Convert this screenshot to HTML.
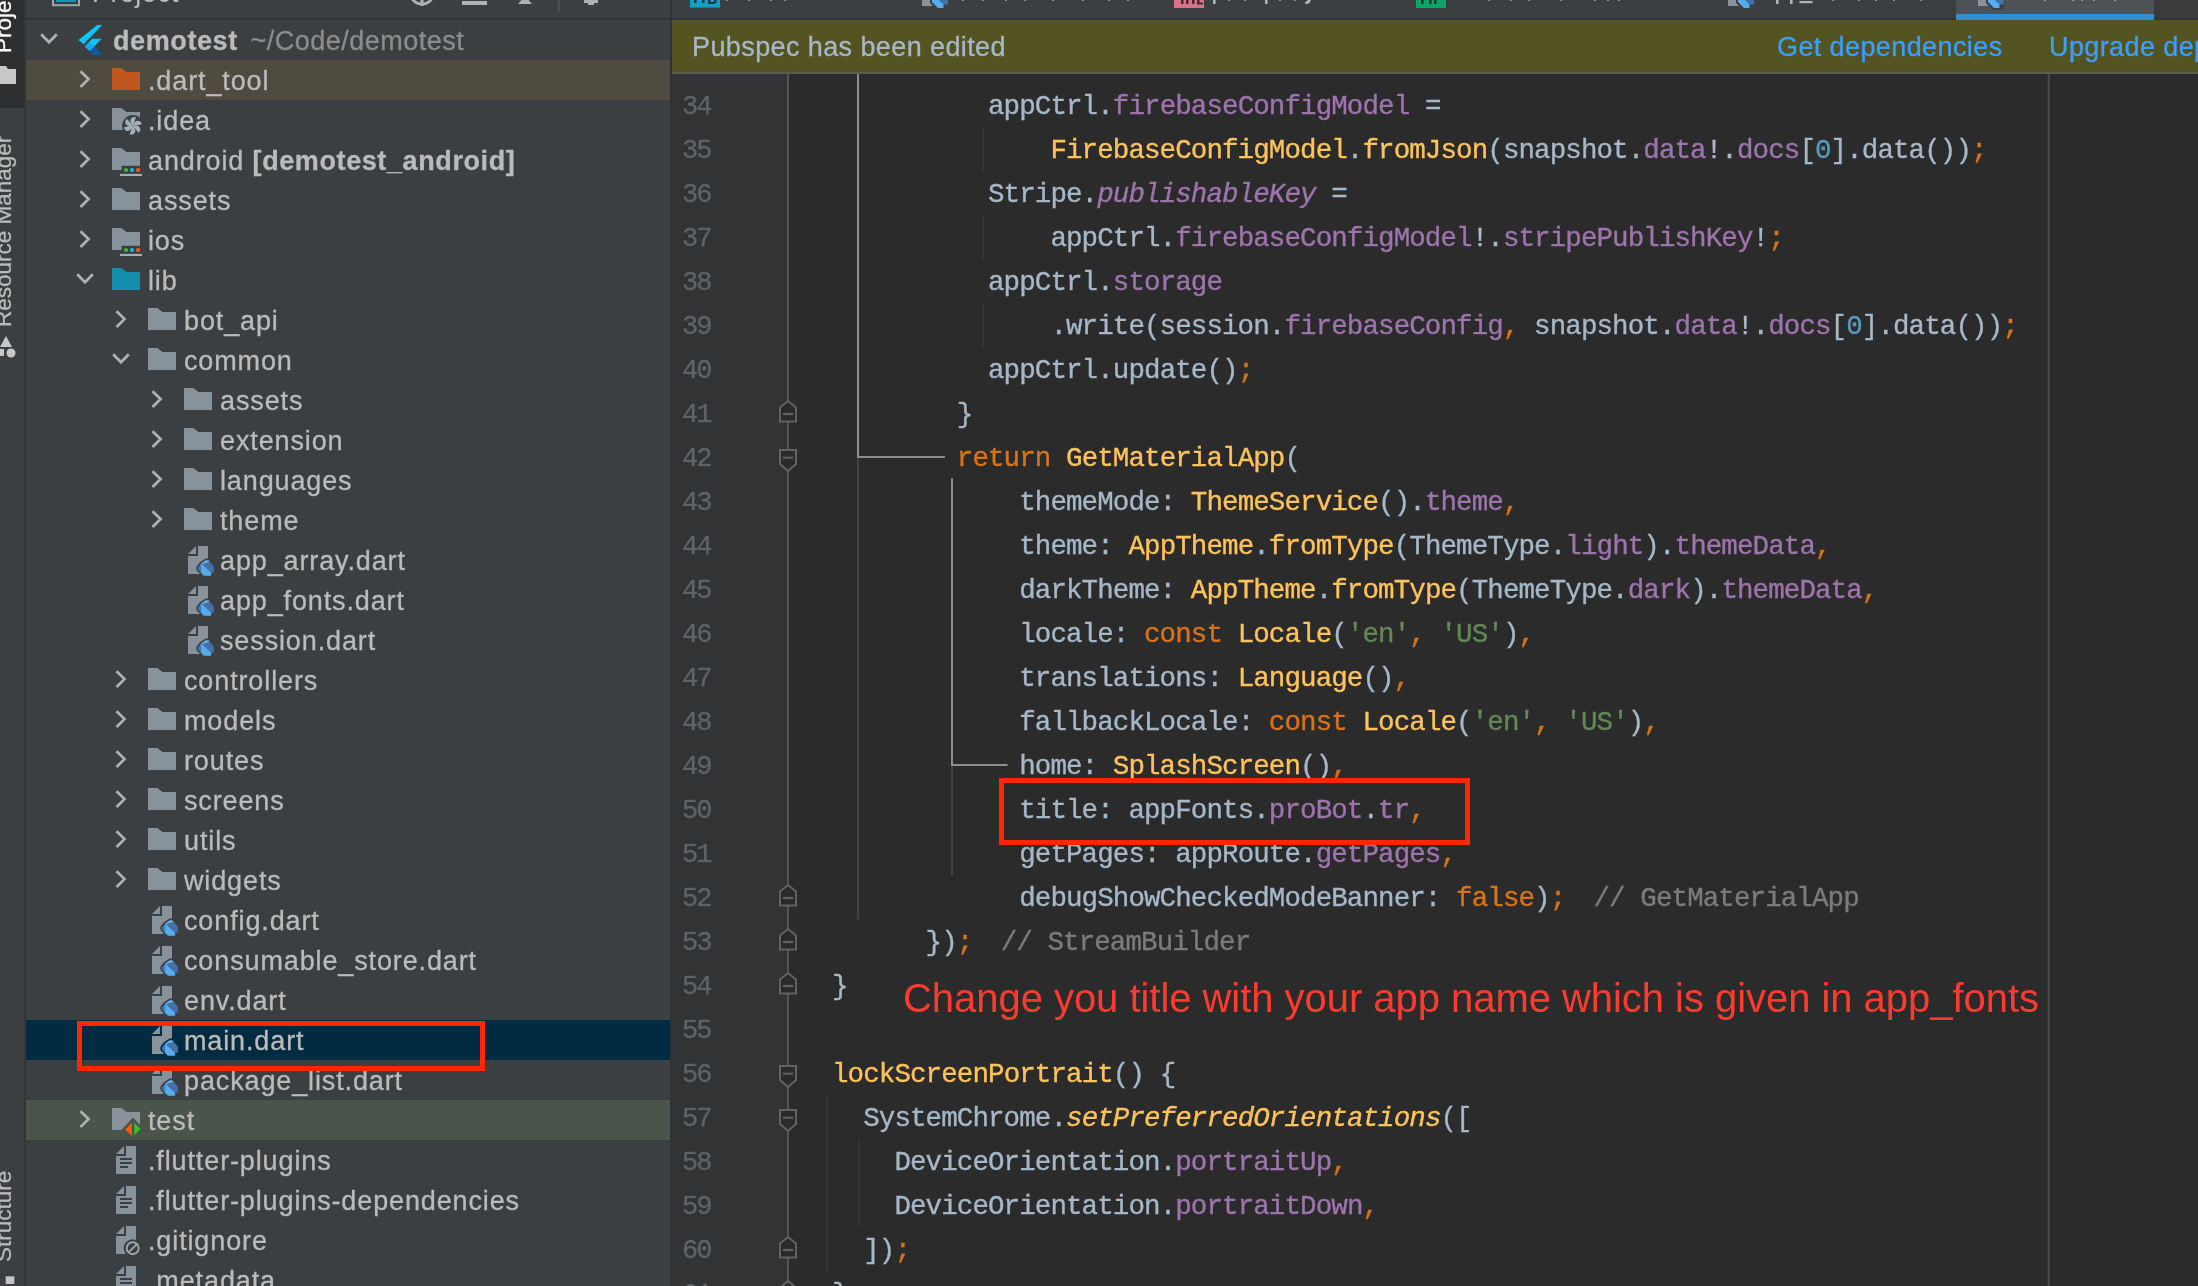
<!DOCTYPE html><html><head><meta charset="utf-8"><title>IDE</title>
<style>
*{box-sizing:border-box;margin:0;padding:0}
html,body{width:2198px;height:1286px;overflow:hidden;background:#2b2b2b}
body{position:relative;font-family:"Liberation Sans",sans-serif;color:#bbbbbb}
.abs{position:absolute}
#root{position:absolute;left:0;top:0;width:2198px;height:1286px;overflow:hidden;will-change:transform}
#strip{left:0;top:0;width:24px;height:1286px;background:#3c3f41}
#stripsel{left:0;top:0;width:24px;height:108px;background:#2d2f30}
#stripline{left:24px;top:0;width:2px;height:1286px;background:#333537}
.vtext{position:absolute;white-space:nowrap;transform-origin:0 0;transform:rotate(-90deg);font-size:22.5px;line-height:26px;height:26px;-webkit-text-stroke:0.25px}
#panel{left:26px;top:0;width:644px;height:1286px;background:#3c3f41;overflow:hidden}
#phead{left:0;top:0;width:644px;height:19px;background:#3c3f41}
#pheadline{left:0;top:18px;width:644px;height:2px;background:#323435}
.row{position:absolute;left:0;width:644px;height:40px}
.row .lbl{position:absolute;top:1px;height:40px;line-height:40px;font-size:27px;white-space:nowrap;color:#bbbbbb;letter-spacing:0.87px;-webkit-text-stroke:0.3px}
.row .lbl b{font-weight:bold;letter-spacing:0.6px}
.row .lbl .dim{color:#8c8c8c;letter-spacing:0.5px;margin-left:4.3px}
.ico{position:absolute;width:32px;height:32px;top:4px}
.chev{position:absolute;width:24px;height:24px;top:8px}
#divider{left:670px;top:0;width:2px;height:1286px;background:#2f3133}
#tabbar{left:672px;top:0;width:1526px;height:19px;background:#3c3f41}
#tabline{left:672px;top:18px;width:1526px;height:2px;background:#323435}
#banner{left:672px;top:20px;width:1526px;height:53px;background:#545322}
#bannerline{left:672px;top:72px;width:1526px;height:2px;background:#5d5d55}
#banner .t{position:absolute;top:0;height:53px;line-height:54px;font-size:27px;letter-spacing:0.4px;white-space:nowrap;-webkit-text-stroke:0.3px}
#gutter{left:672px;top:74px;width:117px;height:1212px;background:#313335}
#editor{left:672px;top:74px;width:1526px;height:1212px;overflow:hidden}
.ln{position:absolute;left:10px;width:60px;height:44px;line-height:44px;font-family:"Liberation Mono",monospace;font-size:27px;letter-spacing:-2px;color:#606366;white-space:pre;-webkit-text-stroke:0.3px}
.cl{position:absolute;height:44px;line-height:44px;font-family:"Liberation Mono",monospace;font-size:27.5px;letter-spacing:-0.9px;color:#a6b8c8;white-space:pre;-webkit-text-stroke:0.35px}
.cl i{font-style:italic}
.k{color:#d97317}.s{color:#628854}.n{color:#5999bf}.f{color:#9e74ae}.y{color:#ffc35b}.c{color:#7b7b7b;position:relative;left:-3px}
.vl{position:absolute;width:1px}
.hl{position:absolute;height:1px}
#redtxt{left:903px;top:970px;height:56px;line-height:56px;font-size:40px;letter-spacing:-0.04px;color:#ff3b30;white-space:nowrap}
.redbox{position:absolute;border:5px solid #ff2600}
</style></head><body><div id="root">
<div class="abs" id="strip"></div><div class="abs" id="stripsel"></div>
<div class="vtext" style="left:-9px;top:53px;color:#ffffff">Project</div>
<div class="vtext" style="left:-9px;top:327px;color:#bbbbbb">Resource Manager</div>
<div class="vtext" style="left:-9px;top:1262px;color:#bbbbbb">Structure</div>
<svg class="abs" style="left:0;top:0" width="25" height="1286" viewBox="0 0 25 1286"><path d="M0 66h6l2 3h8v15H0z" fill="#c8c8c8"/><polygon points="0,347 6,336 12,347" fill="#c8c8c8"/><rect x="-2" y="349" width="6" height="7" fill="#c8c8c8"/><circle cx="11" cy="353" r="4.5" fill="#c8c8c8"/><rect x="5.7" y="1276.3" width="8.6" height="7.7" fill="#c4c4c4"/></svg>
<div class="abs" id="stripline"></div>
<div class="abs" id="panel">
<div class="row" style="top:20px;"><svg class="chev" style="left:11px" viewBox="0 0 24 24"><polyline points="4.2,6.2 12,14.3 19.8,6.2" fill="none" stroke="#afb1b3" stroke-width="2.7"/></svg><svg class="ico" style="left:47px;top:3px;width:34px;height:34px" viewBox="0 0 34 34"><polygon fill="#08c8fb" points="24.2,2 29.2,2 10.5,21.3 5.5,16.9"/><polygon fill="#08c8fb" points="19.2,15.7 28.6,15.7 16.8,28.1 11.8,23.5"/><polygon fill="#19a8e8" points="11.8,23.5 16.7,18.7 21.7,23.8 16.8,28.1"/><polygon fill="#0b5aa8" points="16.8,28.1 21.7,23.8 29.2,31.9 19.9,31.9"/></svg><div class="lbl" style="left:87px"><b>demotest</b> <span class="dim">~/Code/demotest</span></div></div>
<div class="row" style="top:60px;background:#4f4b41;"><svg class="chev" style="left:47px" viewBox="0 0 24 24"><polyline points="7.5,3.2 15.5,11.1 7.5,19" fill="none" stroke="#afb1b3" stroke-width="2.7"/></svg><svg class="ico" style="left:84px" viewBox="0 0 32 32"><polygon fill="#c0571f" points="2,26 30,26 30,8 16.2,8 11.6,4 2,4"/></svg><div class="lbl" style="left:122px">.dart_tool</div></div>
<div class="row" style="top:100px;"><svg class="chev" style="left:47px" viewBox="0 0 24 24"><polyline points="7.5,3.2 15.5,11.1 7.5,19" fill="none" stroke="#afb1b3" stroke-width="2.7"/></svg><svg class="ico" style="left:84px" viewBox="0 0 32 32"><polygon fill="#87929a" points="2,26 30,26 30,8 16.2,8 11.6,4 2,4"/><circle cx="22.8" cy="21.8" r="10.7" fill="#3c3f41"/><g fill="#a3b0b9"><path d="M22.80 21.80 Q17.95 16.41 22.50 13.16 L25.98 13.06 Q24.50 17.98 22.80 21.80 Z"/><path d="M22.80 21.80 Q25.04 14.90 30.13 17.22 L31.96 20.19 Q26.96 21.36 22.80 21.80 Z"/><path d="M22.80 21.80 Q29.90 20.29 30.44 25.86 L28.78 28.92 Q25.26 25.19 22.80 21.80 Z"/><path d="M22.80 21.80 Q27.65 27.19 23.10 30.44 L19.62 30.54 Q21.10 25.62 22.80 21.80 Z"/><path d="M22.80 21.80 Q20.56 28.70 15.47 26.38 L13.64 23.41 Q18.64 22.24 22.80 21.80 Z"/><path d="M22.80 21.80 Q15.70 23.31 15.16 17.74 L16.82 14.68 Q20.34 18.41 22.80 21.80 Z"/></g></svg><div class="lbl" style="left:122px">.idea</div></div>
<div class="row" style="top:140px;"><svg class="chev" style="left:47px" viewBox="0 0 24 24"><polyline points="7.5,3.2 15.5,11.1 7.5,19" fill="none" stroke="#afb1b3" stroke-width="2.7"/></svg><svg class="ico" style="left:84px" viewBox="0 0 32 32"><polygon fill="#87929a" points="2,26 30,26 30,8 16.2,8 11.6,4 2,4"/><rect x="11.6" y="21.8" width="21" height="11" fill="#3c3f41"/><circle cx="16.1" cy="26" r="2.1" fill="#3bb82e"/><circle cx="22" cy="26" r="2.1" fill="#1ab8f0"/><circle cx="28" cy="26" r="2.1" fill="#ff5a0e"/><rect x="9.9" y="29.9" width="22.2" height="2.1" fill="#a4b0b8"/></svg><div class="lbl" style="left:122px">android <b>[demotest_android]</b></div></div>
<div class="row" style="top:180px;"><svg class="chev" style="left:47px" viewBox="0 0 24 24"><polyline points="7.5,3.2 15.5,11.1 7.5,19" fill="none" stroke="#afb1b3" stroke-width="2.7"/></svg><svg class="ico" style="left:84px" viewBox="0 0 32 32"><polygon fill="#87929a" points="2,26 30,26 30,8 16.2,8 11.6,4 2,4"/></svg><div class="lbl" style="left:122px">assets</div></div>
<div class="row" style="top:220px;"><svg class="chev" style="left:47px" viewBox="0 0 24 24"><polyline points="7.5,3.2 15.5,11.1 7.5,19" fill="none" stroke="#afb1b3" stroke-width="2.7"/></svg><svg class="ico" style="left:84px" viewBox="0 0 32 32"><polygon fill="#87929a" points="2,26 30,26 30,8 16.2,8 11.6,4 2,4"/><rect x="11.6" y="21.8" width="21" height="11" fill="#3c3f41"/><circle cx="16.1" cy="26" r="2.1" fill="#3bb82e"/><circle cx="22" cy="26" r="2.1" fill="#1ab8f0"/><circle cx="28" cy="26" r="2.1" fill="#ff5a0e"/><rect x="9.9" y="29.9" width="22.2" height="2.1" fill="#a4b0b8"/></svg><div class="lbl" style="left:122px">ios</div></div>
<div class="row" style="top:260px;"><svg class="chev" style="left:47px" viewBox="0 0 24 24"><polyline points="4.2,6.2 12,14.3 19.8,6.2" fill="none" stroke="#afb1b3" stroke-width="2.7"/></svg><svg class="ico" style="left:84px" viewBox="0 0 32 32"><polygon fill="#148dac" points="2,26 30,26 30,8 16.2,8 11.6,4 2,4"/></svg><div class="lbl" style="left:122px">lib</div></div>
<div class="row" style="top:300px;"><svg class="chev" style="left:83px" viewBox="0 0 24 24"><polyline points="7.5,3.2 15.5,11.1 7.5,19" fill="none" stroke="#afb1b3" stroke-width="2.7"/></svg><svg class="ico" style="left:120px" viewBox="0 0 32 32"><polygon fill="#87929a" points="2,26 30,26 30,8 16.2,8 11.6,4 2,4"/></svg><div class="lbl" style="left:158px">bot_api</div></div>
<div class="row" style="top:340px;"><svg class="chev" style="left:83px" viewBox="0 0 24 24"><polyline points="4.2,6.2 12,14.3 19.8,6.2" fill="none" stroke="#afb1b3" stroke-width="2.7"/></svg><svg class="ico" style="left:120px" viewBox="0 0 32 32"><polygon fill="#87929a" points="2,26 30,26 30,8 16.2,8 11.6,4 2,4"/></svg><div class="lbl" style="left:158px">common</div></div>
<div class="row" style="top:380px;"><svg class="chev" style="left:119px" viewBox="0 0 24 24"><polyline points="7.5,3.2 15.5,11.1 7.5,19" fill="none" stroke="#afb1b3" stroke-width="2.7"/></svg><svg class="ico" style="left:156px" viewBox="0 0 32 32"><polygon fill="#87929a" points="2,26 30,26 30,8 16.2,8 11.6,4 2,4"/></svg><div class="lbl" style="left:194px">assets</div></div>
<div class="row" style="top:420px;"><svg class="chev" style="left:119px" viewBox="0 0 24 24"><polyline points="7.5,3.2 15.5,11.1 7.5,19" fill="none" stroke="#afb1b3" stroke-width="2.7"/></svg><svg class="ico" style="left:156px" viewBox="0 0 32 32"><polygon fill="#87929a" points="2,26 30,26 30,8 16.2,8 11.6,4 2,4"/></svg><div class="lbl" style="left:194px">extension</div></div>
<div class="row" style="top:460px;"><svg class="chev" style="left:119px" viewBox="0 0 24 24"><polyline points="7.5,3.2 15.5,11.1 7.5,19" fill="none" stroke="#afb1b3" stroke-width="2.7"/></svg><svg class="ico" style="left:156px" viewBox="0 0 32 32"><polygon fill="#87929a" points="2,26 30,26 30,8 16.2,8 11.6,4 2,4"/></svg><div class="lbl" style="left:194px">languages</div></div>
<div class="row" style="top:500px;"><svg class="chev" style="left:119px" viewBox="0 0 24 24"><polyline points="7.5,3.2 15.5,11.1 7.5,19" fill="none" stroke="#afb1b3" stroke-width="2.7"/></svg><svg class="ico" style="left:156px" viewBox="0 0 32 32"><polygon fill="#87929a" points="2,26 30,26 30,8 16.2,8 11.6,4 2,4"/></svg><div class="lbl" style="left:194px">theme</div></div>
<div class="row" style="top:540px;"><svg class="ico" style="left:156px" viewBox="0 0 32 32"><polygon fill="#87929a" points="14,2 6,10 14,10"/><polygon fill="#87929a" points="16,2 26,2 26,30 6,30 6,12 16,12"/><polygon fill="#3c3f41" stroke="#3c3f41" stroke-width="3.2" stroke-linejoin="round" points="16,23.4 18.5,19.9 23.8,16.2 26.3,16.2 31.9,22.4 31.9,28.7 29.1,28.7 29.1,31.8 21.9,31.8 16,25.5"/><polygon fill="#62b8f2" points="18.5,19.95 23.8,16.2 26.3,16.2 27.8,18.1 20.3,20.3"/><polygon fill="#4571a9" points="20.3,20.3 27.8,18.1 31.9,22.4 31.9,28.7 29.1,28.7"/><polygon fill="#55acee" points="18.5,20.3 20.3,20.3 29.1,28.7 29.1,31.8 21.9,31.8 18.5,28.3"/><polygon fill="#3f77c1" points="16,23.4 18.5,19.95 18.5,28.3 16,25.5"/></svg><div class="lbl" style="left:194px">app_array.dart</div></div>
<div class="row" style="top:580px;"><svg class="ico" style="left:156px" viewBox="0 0 32 32"><polygon fill="#87929a" points="14,2 6,10 14,10"/><polygon fill="#87929a" points="16,2 26,2 26,30 6,30 6,12 16,12"/><polygon fill="#3c3f41" stroke="#3c3f41" stroke-width="3.2" stroke-linejoin="round" points="16,23.4 18.5,19.9 23.8,16.2 26.3,16.2 31.9,22.4 31.9,28.7 29.1,28.7 29.1,31.8 21.9,31.8 16,25.5"/><polygon fill="#62b8f2" points="18.5,19.95 23.8,16.2 26.3,16.2 27.8,18.1 20.3,20.3"/><polygon fill="#4571a9" points="20.3,20.3 27.8,18.1 31.9,22.4 31.9,28.7 29.1,28.7"/><polygon fill="#55acee" points="18.5,20.3 20.3,20.3 29.1,28.7 29.1,31.8 21.9,31.8 18.5,28.3"/><polygon fill="#3f77c1" points="16,23.4 18.5,19.95 18.5,28.3 16,25.5"/></svg><div class="lbl" style="left:194px">app_fonts.dart</div></div>
<div class="row" style="top:620px;"><svg class="ico" style="left:156px" viewBox="0 0 32 32"><polygon fill="#87929a" points="14,2 6,10 14,10"/><polygon fill="#87929a" points="16,2 26,2 26,30 6,30 6,12 16,12"/><polygon fill="#3c3f41" stroke="#3c3f41" stroke-width="3.2" stroke-linejoin="round" points="16,23.4 18.5,19.9 23.8,16.2 26.3,16.2 31.9,22.4 31.9,28.7 29.1,28.7 29.1,31.8 21.9,31.8 16,25.5"/><polygon fill="#62b8f2" points="18.5,19.95 23.8,16.2 26.3,16.2 27.8,18.1 20.3,20.3"/><polygon fill="#4571a9" points="20.3,20.3 27.8,18.1 31.9,22.4 31.9,28.7 29.1,28.7"/><polygon fill="#55acee" points="18.5,20.3 20.3,20.3 29.1,28.7 29.1,31.8 21.9,31.8 18.5,28.3"/><polygon fill="#3f77c1" points="16,23.4 18.5,19.95 18.5,28.3 16,25.5"/></svg><div class="lbl" style="left:194px">session.dart</div></div>
<div class="row" style="top:660px;"><svg class="chev" style="left:83px" viewBox="0 0 24 24"><polyline points="7.5,3.2 15.5,11.1 7.5,19" fill="none" stroke="#afb1b3" stroke-width="2.7"/></svg><svg class="ico" style="left:120px" viewBox="0 0 32 32"><polygon fill="#87929a" points="2,26 30,26 30,8 16.2,8 11.6,4 2,4"/></svg><div class="lbl" style="left:158px">controllers</div></div>
<div class="row" style="top:700px;"><svg class="chev" style="left:83px" viewBox="0 0 24 24"><polyline points="7.5,3.2 15.5,11.1 7.5,19" fill="none" stroke="#afb1b3" stroke-width="2.7"/></svg><svg class="ico" style="left:120px" viewBox="0 0 32 32"><polygon fill="#87929a" points="2,26 30,26 30,8 16.2,8 11.6,4 2,4"/></svg><div class="lbl" style="left:158px">models</div></div>
<div class="row" style="top:740px;"><svg class="chev" style="left:83px" viewBox="0 0 24 24"><polyline points="7.5,3.2 15.5,11.1 7.5,19" fill="none" stroke="#afb1b3" stroke-width="2.7"/></svg><svg class="ico" style="left:120px" viewBox="0 0 32 32"><polygon fill="#87929a" points="2,26 30,26 30,8 16.2,8 11.6,4 2,4"/></svg><div class="lbl" style="left:158px">routes</div></div>
<div class="row" style="top:780px;"><svg class="chev" style="left:83px" viewBox="0 0 24 24"><polyline points="7.5,3.2 15.5,11.1 7.5,19" fill="none" stroke="#afb1b3" stroke-width="2.7"/></svg><svg class="ico" style="left:120px" viewBox="0 0 32 32"><polygon fill="#87929a" points="2,26 30,26 30,8 16.2,8 11.6,4 2,4"/></svg><div class="lbl" style="left:158px">screens</div></div>
<div class="row" style="top:820px;"><svg class="chev" style="left:83px" viewBox="0 0 24 24"><polyline points="7.5,3.2 15.5,11.1 7.5,19" fill="none" stroke="#afb1b3" stroke-width="2.7"/></svg><svg class="ico" style="left:120px" viewBox="0 0 32 32"><polygon fill="#87929a" points="2,26 30,26 30,8 16.2,8 11.6,4 2,4"/></svg><div class="lbl" style="left:158px">utils</div></div>
<div class="row" style="top:860px;"><svg class="chev" style="left:83px" viewBox="0 0 24 24"><polyline points="7.5,3.2 15.5,11.1 7.5,19" fill="none" stroke="#afb1b3" stroke-width="2.7"/></svg><svg class="ico" style="left:120px" viewBox="0 0 32 32"><polygon fill="#87929a" points="2,26 30,26 30,8 16.2,8 11.6,4 2,4"/></svg><div class="lbl" style="left:158px">widgets</div></div>
<div class="row" style="top:900px;"><svg class="ico" style="left:120px" viewBox="0 0 32 32"><polygon fill="#87929a" points="14,2 6,10 14,10"/><polygon fill="#87929a" points="16,2 26,2 26,30 6,30 6,12 16,12"/><polygon fill="#3c3f41" stroke="#3c3f41" stroke-width="3.2" stroke-linejoin="round" points="16,23.4 18.5,19.9 23.8,16.2 26.3,16.2 31.9,22.4 31.9,28.7 29.1,28.7 29.1,31.8 21.9,31.8 16,25.5"/><polygon fill="#62b8f2" points="18.5,19.95 23.8,16.2 26.3,16.2 27.8,18.1 20.3,20.3"/><polygon fill="#4571a9" points="20.3,20.3 27.8,18.1 31.9,22.4 31.9,28.7 29.1,28.7"/><polygon fill="#55acee" points="18.5,20.3 20.3,20.3 29.1,28.7 29.1,31.8 21.9,31.8 18.5,28.3"/><polygon fill="#3f77c1" points="16,23.4 18.5,19.95 18.5,28.3 16,25.5"/></svg><div class="lbl" style="left:158px">config.dart</div></div>
<div class="row" style="top:940px;"><svg class="ico" style="left:120px" viewBox="0 0 32 32"><polygon fill="#87929a" points="14,2 6,10 14,10"/><polygon fill="#87929a" points="16,2 26,2 26,30 6,30 6,12 16,12"/><polygon fill="#3c3f41" stroke="#3c3f41" stroke-width="3.2" stroke-linejoin="round" points="16,23.4 18.5,19.9 23.8,16.2 26.3,16.2 31.9,22.4 31.9,28.7 29.1,28.7 29.1,31.8 21.9,31.8 16,25.5"/><polygon fill="#62b8f2" points="18.5,19.95 23.8,16.2 26.3,16.2 27.8,18.1 20.3,20.3"/><polygon fill="#4571a9" points="20.3,20.3 27.8,18.1 31.9,22.4 31.9,28.7 29.1,28.7"/><polygon fill="#55acee" points="18.5,20.3 20.3,20.3 29.1,28.7 29.1,31.8 21.9,31.8 18.5,28.3"/><polygon fill="#3f77c1" points="16,23.4 18.5,19.95 18.5,28.3 16,25.5"/></svg><div class="lbl" style="left:158px">consumable_store.dart</div></div>
<div class="row" style="top:980px;"><svg class="ico" style="left:120px" viewBox="0 0 32 32"><polygon fill="#87929a" points="14,2 6,10 14,10"/><polygon fill="#87929a" points="16,2 26,2 26,30 6,30 6,12 16,12"/><polygon fill="#3c3f41" stroke="#3c3f41" stroke-width="3.2" stroke-linejoin="round" points="16,23.4 18.5,19.9 23.8,16.2 26.3,16.2 31.9,22.4 31.9,28.7 29.1,28.7 29.1,31.8 21.9,31.8 16,25.5"/><polygon fill="#62b8f2" points="18.5,19.95 23.8,16.2 26.3,16.2 27.8,18.1 20.3,20.3"/><polygon fill="#4571a9" points="20.3,20.3 27.8,18.1 31.9,22.4 31.9,28.7 29.1,28.7"/><polygon fill="#55acee" points="18.5,20.3 20.3,20.3 29.1,28.7 29.1,31.8 21.9,31.8 18.5,28.3"/><polygon fill="#3f77c1" points="16,23.4 18.5,19.95 18.5,28.3 16,25.5"/></svg><div class="lbl" style="left:158px">env.dart</div></div>
<div class="row" style="top:1020px;background:#022a40;"><svg class="ico" style="left:120px" viewBox="0 0 32 32"><polygon fill="#87929a" points="14,2 6,10 14,10"/><polygon fill="#87929a" points="16,2 26,2 26,30 6,30 6,12 16,12"/><polygon fill="#022a40" stroke="#022a40" stroke-width="3.2" stroke-linejoin="round" points="16,23.4 18.5,19.9 23.8,16.2 26.3,16.2 31.9,22.4 31.9,28.7 29.1,28.7 29.1,31.8 21.9,31.8 16,25.5"/><polygon fill="#62b8f2" points="18.5,19.95 23.8,16.2 26.3,16.2 27.8,18.1 20.3,20.3"/><polygon fill="#4571a9" points="20.3,20.3 27.8,18.1 31.9,22.4 31.9,28.7 29.1,28.7"/><polygon fill="#55acee" points="18.5,20.3 20.3,20.3 29.1,28.7 29.1,31.8 21.9,31.8 18.5,28.3"/><polygon fill="#3f77c1" points="16,23.4 18.5,19.95 18.5,28.3 16,25.5"/></svg><div class="lbl" style="left:158px">main.dart</div></div>
<div class="row" style="top:1060px;"><svg class="ico" style="left:120px" viewBox="0 0 32 32"><polygon fill="#87929a" points="14,2 6,10 14,10"/><polygon fill="#87929a" points="16,2 26,2 26,30 6,30 6,12 16,12"/><polygon fill="#3c3f41" stroke="#3c3f41" stroke-width="3.2" stroke-linejoin="round" points="16,23.4 18.5,19.9 23.8,16.2 26.3,16.2 31.9,22.4 31.9,28.7 29.1,28.7 29.1,31.8 21.9,31.8 16,25.5"/><polygon fill="#62b8f2" points="18.5,19.95 23.8,16.2 26.3,16.2 27.8,18.1 20.3,20.3"/><polygon fill="#4571a9" points="20.3,20.3 27.8,18.1 31.9,22.4 31.9,28.7 29.1,28.7"/><polygon fill="#55acee" points="18.5,20.3 20.3,20.3 29.1,28.7 29.1,31.8 21.9,31.8 18.5,28.3"/><polygon fill="#3f77c1" points="16,23.4 18.5,19.95 18.5,28.3 16,25.5"/></svg><div class="lbl" style="left:158px">package_list.dart</div></div>
<div class="row" style="top:1100px;background:#49544a;"><svg class="chev" style="left:47px" viewBox="0 0 24 24"><polyline points="7.5,3.2 15.5,11.1 7.5,19" fill="none" stroke="#afb1b3" stroke-width="2.7"/></svg><svg class="ico" style="left:84px" viewBox="0 0 32 32"><polygon fill="#87929a" points="2,26 30,26 30,8 16.2,8 11.6,4 2,4"/><polygon fill="#49544a" points="12,25.2 23,13.5 34,25.2 23,37"/><polygon fill="#ff5a0e" points="15.1,25.6 21.9,18.4 21.9,31.9"/><polygon fill="#3bb82e" points="24.2,18.4 30.7,24.9 24.2,31.4"/></svg><div class="lbl" style="left:122px">test</div></div>
<div class="row" style="top:1140px;"><svg class="ico" style="left:84px" viewBox="0 0 32 32"><polygon fill="#87929a" points="14,2 6,10 14,10"/><polygon fill="#87929a" points="16,2 26,2 26,30 6,30 6,12 16,12"/><rect x="10" y="14" width="12" height="2" fill="#3c3f41"/><rect x="10" y="18" width="12" height="2" fill="#3c3f41"/><rect x="10" y="22" width="8" height="2" fill="#3c3f41"/></svg><div class="lbl" style="left:122px">.flutter-plugins</div></div>
<div class="row" style="top:1180px;"><svg class="ico" style="left:84px" viewBox="0 0 32 32"><polygon fill="#87929a" points="14,2 6,10 14,10"/><polygon fill="#87929a" points="16,2 26,2 26,30 6,30 6,12 16,12"/><rect x="10" y="14" width="12" height="2" fill="#3c3f41"/><rect x="10" y="18" width="12" height="2" fill="#3c3f41"/><rect x="10" y="22" width="8" height="2" fill="#3c3f41"/></svg><div class="lbl" style="left:122px">.flutter-plugins-dependencies</div></div>
<div class="row" style="top:1220px;"><svg class="ico" style="left:84px" viewBox="0 0 32 32"><polygon fill="#87929a" points="14,2 6,10 14,10"/><polygon fill="#87929a" points="16,2 26,2 26,30 6,30 6,12 16,12"/><circle cx="22.7" cy="24.2" r="9" fill="#3c3f41"/><circle cx="22.7" cy="24.2" r="6" fill="none" stroke="#9ba6ae" stroke-width="1.9"/><line x1="18.6" y1="28.3" x2="26.8" y2="20.1" stroke="#9ba6ae" stroke-width="1.9"/></svg><div class="lbl" style="left:122px">.gitignore</div></div>
<div class="row" style="top:1260px;"><svg class="ico" style="left:84px" viewBox="0 0 32 32"><polygon fill="#87929a" points="14,2 6,10 14,10"/><polygon fill="#87929a" points="16,2 26,2 26,30 6,30 6,12 16,12"/><rect x="10" y="14" width="12" height="2" fill="#3c3f41"/><rect x="10" y="18" width="12" height="2" fill="#3c3f41"/><rect x="10" y="22" width="8" height="2" fill="#3c3f41"/></svg><div class="lbl" style="left:122px">.metadata</div></div>
<div class="abs" id="phead"><svg class="abs" style="left:0;top:0" width="644" height="19" viewBox="0 0 644 19"><rect x="27" y="-10" width="26" height="15.2" fill="#3c3f41" stroke="#9aa7b0" stroke-width="2"/><rect x="30" y="-10" width="20" height="12" fill="#1196b8"/><circle cx="396" cy="-8" r="12" fill="none" stroke="#afb1b3" stroke-width="2.6"/><rect x="394.5" y="-8" width="3" height="14" fill="#afb1b3"/><rect x="436" y="1" width="25" height="4" fill="#afb1b3"/><polygon points="492,4 506,4 499,-4" fill="#afb1b3"/><rect x="532" y="0" width="1.5" height="12" fill="#555555"/><rect x="558" y="-3" width="14" height="6" fill="#afb1b3"/><rect x="562" y="0" width="6" height="5" fill="#afb1b3"/></svg><div class="abs" style="left:66px;top:-22px;height:30px;line-height:30px;font-size:27px;letter-spacing:0.4px;color:#bbbbbb;white-space:nowrap">Project</div></div><div class="abs" id="pheadline"></div>
</div>
<div class="abs" id="divider"></div>
<div class="abs" id="tabbar"><svg class="abs" style="left:0;top:0" width="1526" height="19" viewBox="0 0 1526 19"><rect x="1284" y="0" width="198" height="19" fill="#4e5254"/><rect x="1482" y="0" width="44" height="19" fill="#393b3d"/><rect x="18" y="-10" width="30" height="17.6" fill="#13a0c4"/><g fill="#1c3a44"><rect x="22" y="0" width="2.5" height="3"/><rect x="30" y="0" width="2.5" height="3"/><rect x="36" y="0" width="2.5" height="3"/><rect x="36" y="2" width="7" height="2"/><rect x="42" y="0" width="2.5" height="3"/></g><rect x="250" y="0" width="10.5" height="6" fill="#87929a"/><polygon points="258,0 277,0 277,6 272,10 265,10 258,3" fill="#3c3f41"/><polygon points="263,0 276,0 276,4.5 271.5,4.5 267,0" fill="#4571a9"/><polygon points="260,0 267,0 271.5,4.5 271.5,8 266,8 260,2" fill="#55acee"/><rect x="502" y="-10" width="30" height="18" fill="#d9738a"/><g fill="#4a2630"><rect x="509" y="0" width="2.5" height="4"/><rect x="514" y="0" width="2.5" height="4"/><rect x="520" y="0" width="2.5" height="4"/><rect x="525" y="0" width="2.5" height="4"/><rect x="525" y="2.5" width="6" height="2"/></g><rect x="744" y="-10" width="30" height="18" fill="#0da565"/><g fill="#0b3a26"><rect x="749" y="0" width="2.5" height="4"/><rect x="757" y="0" width="2.5" height="4"/><rect x="762" y="0" width="2.5" height="4"/></g><rect x="1056" y="0" width="10.5" height="6" fill="#87929a"/><polygon points="1064,0 1083,0 1083,6 1078,10 1071,10 1064,3" fill="#3c3f41"/><polygon points="1069,0 1082,0 1082,4.5 1077.5,4.5 1073,0" fill="#4571a9"/><polygon points="1066,0 1073,0 1077.5,4.5 1077.5,8 1072,8 1066,2" fill="#55acee"/><rect x="1306" y="0" width="10.5" height="6" fill="#87929a"/><polygon points="1314,0 1333,0 1333,6 1328,10 1321,10 1314,3" fill="#3c3f41"/><polygon points="1319,0 1332,0 1332,4.5 1327.5,4.5 1323,0" fill="#4571a9"/><polygon points="1316,0 1323,0 1327.5,4.5 1327.5,8 1322,8 1316,2" fill="#55acee"/><g fill="#b4b4b4"><rect x="541" y="0" width="2.6" height="4"/><rect x="593" y="0" width="2.6" height="4"/><path d="M636 0 l3 0 l-2 3.5 l-4 0.5 l0 -1.5 z"/><rect x="1104" y="0" width="2.6" height="4"/><rect x="1118" y="0" width="2.6" height="4"/><rect x="1127.5" y="1" width="13" height="2.2"/></g><g fill="#8f9091"><rect x="16" y="0" width="0" height="0"/><rect x="54" y="0" width="2" height="1"/><rect x="76" y="0" width="2" height="1"/><rect x="98" y="0" width="2" height="1"/><rect x="112" y="0" width="2" height="1"/><rect x="290" y="0" width="2" height="1"/><rect x="310" y="0" width="2" height="1"/><rect x="333" y="0" width="2" height="1"/><rect x="352" y="0" width="2" height="1"/><rect x="380" y="0" width="2" height="1"/><rect x="410" y="0" width="2" height="1"/><rect x="436" y="0" width="2" height="1"/><rect x="455" y="0" width="2" height="1"/><rect x="556" y="0" width="2" height="1"/><rect x="572" y="0" width="2" height="1"/><rect x="607" y="0" width="2" height="1"/><rect x="622" y="0" width="2" height="1"/><rect x="816" y="0" width="2" height="1"/><rect x="838" y="0" width="2" height="1"/><rect x="856" y="0" width="2" height="1"/><rect x="888" y="0" width="2" height="1"/><rect x="922" y="0" width="2" height="1"/><rect x="935" y="0" width="2" height="1"/><rect x="946" y="0" width="2" height="1"/><rect x="1160" y="0" width="2" height="1"/><rect x="1186" y="0" width="2" height="1"/><rect x="1203" y="0" width="2" height="1"/><rect x="1221" y="0" width="2" height="1"/><rect x="1248" y="0" width="2" height="1"/><rect x="1372" y="0" width="2" height="1"/><rect x="1400" y="0" width="2" height="1"/><rect x="1409" y="0" width="2" height="1"/><rect x="1421" y="0" width="2" height="1"/><rect x="1442" y="0" width="2" height="1"/></g></svg></div><div class="abs" id="tabline"></div><div class="abs" style="left:1956px;top:14px;width:198px;height:6px;background:#2f8fd0"></div>
<div class="abs" id="banner"><div class="t" style="left:20px;color:#a6b8c8">Pubspec has been edited</div><div class="t" style="left:1105px;color:#3b9ffd">Get dependencies</div><div class="t" style="left:1377px;color:#3b9ffd">Upgrade dependencies</div></div><div class="abs" id="bannerline"></div>
<div class="abs" id="gutter"></div>
<div class="abs" id="editor">
<svg class="abs" style="left:0;top:0" width="1526" height="1212" viewBox="0 0 1526 1212"><line x1="116" y1="0" x2="116" y2="1212" stroke="#555555" stroke-width="2"/><line x1="1376.6999999999998" y1="0" x2="1376.6999999999998" y2="1212" stroke="#4b4b4b" stroke-width="2"/><line x1="186" y1="384" x2="186" y2="845.5" stroke="#4a4a4a" stroke-width="1.6"/><line x1="186" y1="0" x2="186" y2="384" stroke="#8e8e8e" stroke-width="2"/><line x1="185" y1="383" x2="273" y2="383" stroke="#8e8e8e" stroke-width="2"/><line x1="280" y1="692" x2="280" y2="801.5" stroke="#4a4a4a" stroke-width="1.6"/><line x1="280" y1="404" x2="280" y2="692" stroke="#8e8e8e" stroke-width="2"/><line x1="279" y1="691" x2="335.5" y2="691" stroke="#8e8e8e" stroke-width="2"/><line x1="311" y1="53" x2="311" y2="97" stroke="#393939" stroke-width="1.5"/><line x1="311" y1="141" x2="311" y2="185" stroke="#393939" stroke-width="1.5"/><line x1="311" y1="229" x2="311" y2="273" stroke="#393939" stroke-width="1.5"/><line x1="155" y1="1021" x2="155" y2="1197" stroke="#393939" stroke-width="1.5"/><line x1="187" y1="1065" x2="187" y2="1153" stroke="#393939" stroke-width="1.5"/><polygon points="108,347.6 108,333.5 116,327 124,333.5 124,347.6" fill="#2b2b2b" stroke="#626262" stroke-width="2"/><line x1="111" y1="340" x2="121" y2="340" stroke="#626262" stroke-width="2"/><polygon points="108,376 108,390 116,397 124,390 124,376" fill="#2b2b2b" stroke="#626262" stroke-width="2"/><line x1="111" y1="383.7" x2="121" y2="383.7" stroke="#626262" stroke-width="2"/><polygon points="108,831.6 108,817.5 116,811 124,817.5 124,831.6" fill="#2b2b2b" stroke="#626262" stroke-width="2"/><line x1="111" y1="824" x2="121" y2="824" stroke="#626262" stroke-width="2"/><polygon points="108,875.6 108,861.5 116,855 124,861.5 124,875.6" fill="#2b2b2b" stroke="#626262" stroke-width="2"/><line x1="111" y1="868" x2="121" y2="868" stroke="#626262" stroke-width="2"/><polygon points="108,919.6 108,905.5 116,899 124,905.5 124,919.6" fill="#2b2b2b" stroke="#626262" stroke-width="2"/><line x1="111" y1="912" x2="121" y2="912" stroke="#626262" stroke-width="2"/><polygon points="108,992 108,1006 116,1013 124,1006 124,992" fill="#2b2b2b" stroke="#626262" stroke-width="2"/><line x1="111" y1="999.7" x2="121" y2="999.7" stroke="#626262" stroke-width="2"/><polygon points="108,1036 108,1050 116,1057 124,1050 124,1036" fill="#2b2b2b" stroke="#626262" stroke-width="2"/><line x1="111" y1="1043.7" x2="121" y2="1043.7" stroke="#626262" stroke-width="2"/><polygon points="108,1183.6 108,1169.5 116,1163 124,1169.5 124,1183.6" fill="#2b2b2b" stroke="#626262" stroke-width="2"/><line x1="111" y1="1176" x2="121" y2="1176" stroke="#626262" stroke-width="2"/><polygon points="108,1227.6 108,1213.5 116,1207 124,1213.5 124,1227.6" fill="#2b2b2b" stroke="#626262" stroke-width="2"/><line x1="111" y1="1220" x2="121" y2="1220" stroke="#626262" stroke-width="2"/></svg>
<div class="ln" style="top:11px">34</div>
<div class="cl" style="left:316.0px;top:11px">appCtrl.<span class="f">firebaseConfigModel</span> =</div>
<div class="ln" style="top:55px">35</div>
<div class="cl" style="left:378.4px;top:55px"><span class="y">FirebaseConfigModel</span>.<span class="y">fromJson</span>(snapshot.<span class="f">data</span>!.<span class="f">docs</span>[<span class="n">0</span>].data())<span class="k">;</span></div>
<div class="ln" style="top:99px">36</div>
<div class="cl" style="left:316.0px;top:99px">Stripe.<span class="f"><i>publishableKey</i></span> =</div>
<div class="ln" style="top:143px">37</div>
<div class="cl" style="left:378.4px;top:143px">appCtrl.<span class="f">firebaseConfigModel</span>!.<span class="f">stripePublishKey</span>!<span class="k">;</span></div>
<div class="ln" style="top:187px">38</div>
<div class="cl" style="left:316.0px;top:187px">appCtrl.<span class="f">storage</span></div>
<div class="ln" style="top:231px">39</div>
<div class="cl" style="left:378.4px;top:231px">.write(session.<span class="f">firebaseConfig</span><span class="k">,</span> snapshot.<span class="f">data</span>!.<span class="f">docs</span>[<span class="n">0</span>].data())<span class="k">;</span></div>
<div class="ln" style="top:275px">40</div>
<div class="cl" style="left:316.0px;top:275px">appCtrl.update()<span class="k">;</span></div>
<div class="ln" style="top:319px">41</div>
<div class="cl" style="left:284.8px;top:319px">}</div>
<div class="ln" style="top:363px">42</div>
<div class="cl" style="left:284.8px;top:363px"><span class="k">return</span> <span class="y">GetMaterialApp</span>(</div>
<div class="ln" style="top:407px">43</div>
<div class="cl" style="left:347.2px;top:407px">themeMode: <span class="y">ThemeService</span>().<span class="f">theme</span><span class="k">,</span></div>
<div class="ln" style="top:451px">44</div>
<div class="cl" style="left:347.2px;top:451px">theme: <span class="y">AppTheme</span>.<span class="y">fromType</span>(ThemeType.<span class="f">light</span>).<span class="f">themeData</span><span class="k">,</span></div>
<div class="ln" style="top:495px">45</div>
<div class="cl" style="left:347.2px;top:495px">darkTheme: <span class="y">AppTheme</span>.<span class="y">fromType</span>(ThemeType.<span class="f">dark</span>).<span class="f">themeData</span><span class="k">,</span></div>
<div class="ln" style="top:539px">46</div>
<div class="cl" style="left:347.2px;top:539px">locale: <span class="k">const</span> <span class="y">Locale</span>(<span class="s">'en'</span><span class="k">,</span> <span class="s">'US'</span>)<span class="k">,</span></div>
<div class="ln" style="top:583px">47</div>
<div class="cl" style="left:347.2px;top:583px">translations: <span class="y">Language</span>()<span class="k">,</span></div>
<div class="ln" style="top:627px">48</div>
<div class="cl" style="left:347.2px;top:627px">fallbackLocale: <span class="k">const</span> <span class="y">Locale</span>(<span class="s">'en'</span><span class="k">,</span> <span class="s">'US'</span>)<span class="k">,</span></div>
<div class="ln" style="top:671px">49</div>
<div class="cl" style="left:347.2px;top:671px">home: <span class="y">SplashScreen</span>()<span class="k">,</span></div>
<div class="ln" style="top:715px">50</div>
<div class="cl" style="left:347.2px;top:715px">title: appFonts.<span class="f">proBot</span>.<span class="f">tr</span><span class="k">,</span></div>
<div class="ln" style="top:759px">51</div>
<div class="cl" style="left:347.2px;top:759px">getPages: appRoute.<span class="f">getPages</span><span class="k">,</span></div>
<div class="ln" style="top:803px">52</div>
<div class="cl" style="left:347.2px;top:803px">debugShowCheckedModeBanner: <span class="k">false</span>)<span class="k">;</span><span class="c">  // GetMaterialApp</span></div>
<div class="ln" style="top:847px">53</div>
<div class="cl" style="left:253.6px;top:847px">})<span class="k">;</span><span class="c">  // StreamBuilder</span></div>
<div class="ln" style="top:891px">54</div>
<div class="cl" style="left:160.0px;top:891px">}</div>
<div class="ln" style="top:935px">55</div>
<div class="ln" style="top:979px">56</div>
<div class="cl" style="left:160.0px;top:979px"><span class="y">lockScreenPortrait</span>() {</div>
<div class="ln" style="top:1023px">57</div>
<div class="cl" style="left:191.2px;top:1023px">SystemChrome.<span class="y"><i>setPreferredOrientations</i></span>([</div>
<div class="ln" style="top:1067px">58</div>
<div class="cl" style="left:222.4px;top:1067px">DeviceOrientation.<span class="f">portraitUp</span><span class="k">,</span></div>
<div class="ln" style="top:1111px">59</div>
<div class="cl" style="left:222.4px;top:1111px">DeviceOrientation.<span class="f">portraitDown</span><span class="k">,</span></div>
<div class="ln" style="top:1155px">60</div>
<div class="cl" style="left:191.2px;top:1155px">])<span class="k">;</span></div>
<div class="ln" style="top:1199px">61</div>
<div class="cl" style="left:160.0px;top:1199px">}</div>
</div>
<div class="abs" id="redtxt">Change you title with your app name which is given in app_fonts</div>
<div class="redbox" style="left:999px;top:778px;width:471px;height:67px"></div>
<div class="redbox" style="left:77px;top:1021px;width:408px;height:50px"></div>
</div></body></html>
